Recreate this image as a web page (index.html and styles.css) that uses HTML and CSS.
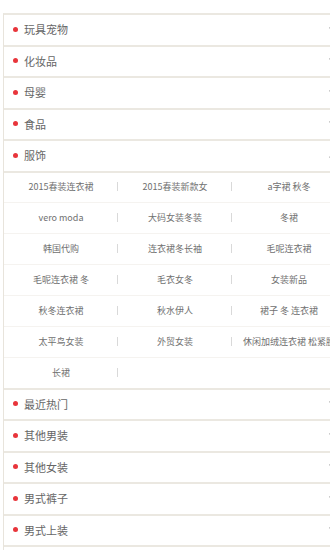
FILE: index.html
```html
<!DOCTYPE html>
<html lang="zh-CN">
<head>
    <meta charset="UTF-8">
    <meta name="viewport" content="width=device-width, initial-scale=1.0">
    <title>分类</title>
    <link rel="stylesheet" href="styles.css">
</head>
<body>

<div class="category-list">
    <div class="cat-head"><span class="dot"></span><span class="cat-name">玩具宠物</span><svg class="arrow" viewBox="0 0 8 5"><path d="M0.5 0.5 L4 4 L7.5 0.5"/></svg></div>
    <div class="cat-head"><span class="dot"></span><span class="cat-name">化妆品</span><svg class="arrow" viewBox="0 0 8 5"><path d="M0.5 0.5 L4 4 L7.5 0.5"/></svg></div>
    <div class="cat-head"><span class="dot"></span><span class="cat-name">母婴</span><svg class="arrow" viewBox="0 0 8 5"><path d="M0.5 0.5 L4 4 L7.5 0.5"/></svg></div>
    <div class="cat-head"><span class="dot"></span><span class="cat-name">食品</span><svg class="arrow" viewBox="0 0 8 5"><path d="M0.5 0.5 L4 4 L7.5 0.5"/></svg></div>
    <div class="cat-head open"><span class="dot"></span><span class="cat-name">服饰</span><svg class="arrow" viewBox="0 0 8 5"><path d="M0.5 4.5 L4 1 L7.5 4.5"/></svg></div>

    <div class="sub-grid">
        <div class="sub">2015春装连衣裙</div>
        <div class="sub">2015春装新款女</div>
        <div class="sub">a字裙 秋冬</div>
        <div class="sub">vero moda</div>
        <div class="sub">大码女装冬装</div>
        <div class="sub">冬裙</div>
        <div class="sub">韩国代购</div>
        <div class="sub">连衣裙冬长袖</div>
        <div class="sub">毛呢连衣裙</div>
        <div class="sub">毛呢连衣裙 冬</div>
        <div class="sub">毛衣女冬</div>
        <div class="sub">女装新品</div>
        <div class="sub">秋冬连衣裙</div>
        <div class="sub">秋水伊人</div>
        <div class="sub">裙子 冬 连衣裙</div>
        <div class="sub">太平鸟女装</div>
        <div class="sub">外贸女装</div>
        <div class="sub">休闲加绒连衣裙 松紧腰</div>
        <div class="sub">长裙</div>
        <div class="sub empty"></div>
        <div class="sub empty"></div>
    </div>

    <div class="cat-head"><span class="dot"></span><span class="cat-name">最近热门</span><svg class="arrow" viewBox="0 0 8 5"><path d="M0.5 0.5 L4 4 L7.5 0.5"/></svg></div>
    <div class="cat-head"><span class="dot"></span><span class="cat-name">其他男装</span><svg class="arrow" viewBox="0 0 8 5"><path d="M0.5 0.5 L4 4 L7.5 0.5"/></svg></div>
    <div class="cat-head"><span class="dot"></span><span class="cat-name">其他女装</span><svg class="arrow" viewBox="0 0 8 5"><path d="M0.5 0.5 L4 4 L7.5 0.5"/></svg></div>
    <div class="cat-head"><span class="dot"></span><span class="cat-name">男式裤子</span><svg class="arrow" viewBox="0 0 8 5"><path d="M0.5 0.5 L4 4 L7.5 0.5"/></svg></div>
    <div class="cat-head"><span class="dot"></span><span class="cat-name">男式上装</span><svg class="arrow" viewBox="0 0 8 5"><path d="M0.5 0.5 L4 4 L7.5 0.5"/></svg></div>
</div>

</body>
</html>
```

FILE: styles.css
```css
html, body {
    overflow: hidden;
}
body {
    margin: 0;
    height: 550px;
    background: #fff;
    font-family: "Noto Sans CJK SC", "Noto Sans", sans-serif;
}
.category-list {
    width: 343px;
    min-height: 540px;
    margin: 13px 0 0 3px;
    border-top: 2px solid #ebe8e1;
    border-left: 1px solid #e8e4dc;
}
.cat-head {
    display: flex;
    align-items: center;
    height: 28.5px;
    padding: 0 10px 1px 9px;
    border-bottom: 2px solid #ebe8e1;
}
.dot {
    width: 5px;
    height: 5px;
    border-radius: 50%;
    background: #e8353b;
    margin-right: 6px;
    flex-shrink: 0;
}
.cat-name {
    flex: 1;
    font-size: 11px;
    color: #666;
}
.arrow {
    width: 8px;
    height: 5px;
    fill: none;
    stroke: #999;
    stroke-width: 1.2;
}
.sub-grid {
    display: grid;
    grid-template-columns: repeat(3, 114px);
    margin-top: -1px;
    border-bottom: 2px solid #ebe8e1;
}
.sub {
    height: 29px;
    padding-bottom: 1px;
    display: flex;
    align-items: center;
    justify-content: center;
    font-size: 9px;
    color: #707070;
    white-space: nowrap;
    overflow: hidden;
    border-bottom: 1px solid #f5f3f0;
    background: linear-gradient(#d9d9d9, #d9d9d9) right center / 1px 9px no-repeat;
}
.sub:nth-last-child(-n+3) {
    border-bottom: none;
}
.sub.empty {
    background: none;
}
```
